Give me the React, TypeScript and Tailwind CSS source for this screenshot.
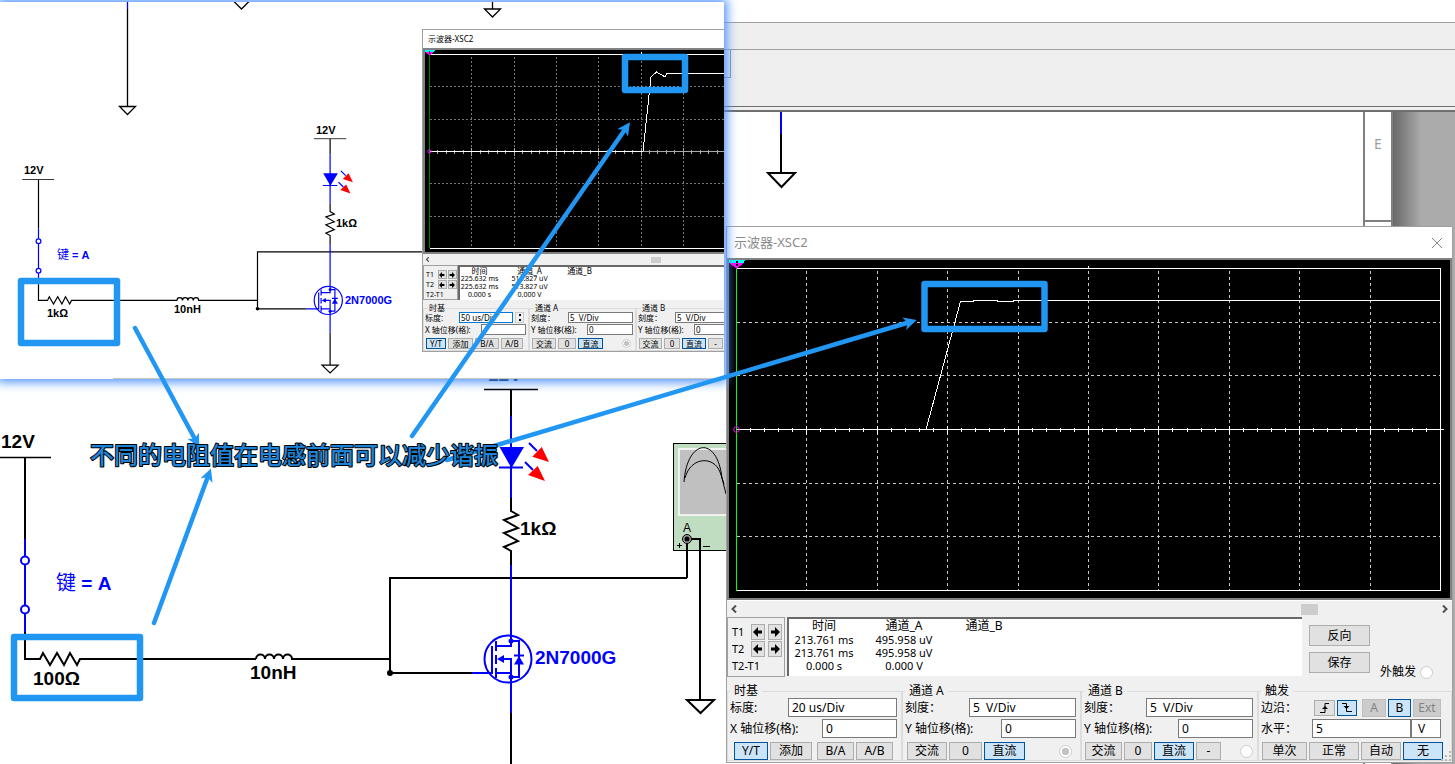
import React from 'react';
import clsx from 'clsx';

const BLUE = '#0000ff';
const MARK = '#2196f3';

const range = (n: number) => Array.from({ length: n }, (_, i) => i);

/* ---------- schematic ---------- */

const Ground = ({ x, y, w = 27, h = 13 }: { x: number; y: number; w?: number; h?: number }) => (
  <path d={`M${x - w / 2} ${y}h${w}L${x} ${y + h}z`} fill="#fff" stroke="#000" />
);

const Circuit = () => (
  <g fill="none" stroke="#000" strokeWidth="2">
    {/* supply and switch */}
    <path d="M-2 457.5H51" strokeWidth="1.3" />
    <path d="M25 458V539M25 632V659H40l3-6 7 12 7-12 7 12 6-12 7 12 3-6H256" />
    <path d="M25 539V556M25 565V605M25 614V632" stroke={BLUE} />
    <circle cx="25" cy="560.5" r="4" stroke={BLUE} />
    <circle cx="25" cy="609.5" r="4" stroke={BLUE} />

    {/* inductor */}
    <path d="M256 659c0-6 9-6 9 0c0-6 9-6 9 0c0-6 9-6 9 0c0-6 9-6 9 0H390" />
    <path d="M687 578H390V673H472" />
    <circle cx="390" cy="673" r="3" fill="#000" stroke="none" />

    {/* led branch */}
    <path d="M484 389.5H538" strokeWidth="1.3" />
    <path d="M511 390V416M511 498V511l7 4-14 5 14 8-14 5 14 8-14 6 7 4V565M511 713V767" />
    <path d="M511 416V498M511 565V646H496M499 467.5H523" stroke={BLUE} />
    <path d="M499.5 447H524L511.5 468z" fill={BLUE} stroke="none" />
    <path d="M529 443l8 8M525 462l8 8" stroke={BLUE} />
    <path d="M541.7 447L532.3 456.7L549 462zM537.7 466L528 475L545 481z" fill="#f00" stroke="none" />

    {/* mosfet */}
    <g stroke={BLUE}>
      <circle cx="508" cy="659" r="23.5" />
      <path d="M472 673H492V646M496 641V651M496 655V664M496 668V678M496 673H511M503 659H511V713" />
      <path d="M511 641H519V677H511M514 655.5H524" />
      <path d="M497 659l7-4v8zM519 656l5 8.5h-10z" fill={BLUE} stroke="none" />
      <circle cx="511" cy="641" r="2.5" fill={BLUE} stroke="none" />
      <circle cx="511" cy="677" r="2.5" fill={BLUE} stroke="none" />
    </g>
    <Ground x={511} y={767} />
  </g>
);

const MainSchematic = () => (
  <svg className="absolute left-0 top-0 h-[764px] w-[1360px]" viewBox="0 0 1360 764">
    <Circuit />
    <g fill="none" stroke="#000" strokeWidth="2">
      <path d="M781 112V134" stroke={BLUE} />
      <path d="M781 134V172" />
      <Ground x={781.5} y={173} h={14} />
      <rect x="673.5" y="443.5" width="70" height="107" fill="#c1ddc1" strokeWidth="1" />
      <rect x="679" y="449" width="60" height="66" fill="#c0c0c0" stroke="#fff" strokeWidth="1.5" />
      <path d="M684 482C687 439 717 435 722 478l4 16M685 478C691 456 714 456 720 472l4 12" strokeWidth="1" />
      <path d="M677 545.5h5M679.5 543v5M703 546.5h7" strokeWidth="1" />
      <path d="M687 539V578M687 539H700V700" />
      <circle cx="687" cy="539" r="4.5" fill="#999" strokeWidth="1" />
      <circle cx="687" cy="539" r="2.5" fill="#000" stroke="none" />
      <Ground x={700.5} y={700} />
    </g>
    <text x="683" y="532" fontSize="12">A</text>
    <g fontSize="19" fontWeight="700">
      <text x="1" y="448">12V</text>
      <text x="488" y="381">12V</text>
      <text x="33" y="685">100Ω</text>
      <text x="250" y="679">10nH</text>
      <text x="520" y="535">1kΩ</text>
      <g fill={BLUE}>
        <text x="535" y="664">2N7000G</text>
        <text x="56" y="590"><tspan fontWeight="400" fontSize="20">键</tspan> = A</text>
      </g>
    </g>
  </svg>
);

const InsetSchematic = () => (
  <svg className="absolute left-0 top-0 h-[377px] w-[724px]" viewBox="0 2 724 377">
    <g transform="translate(23.5 -95) scale(0.6)">
      <Circuit />
    </g>
    <g fill="none" stroke="#000" strokeWidth="1.3">
      <path d="M127.5 9V106M492.5 2V9" />
      <path d="M127.5 2V9" stroke={BLUE} />
      <Ground x={127.5} y={106.5} w={16} h={8} />
      <Ground x={241.5} y={1} w={16} h={8} />
      <Ground x={492.5} y={9} w={16} h={8} />
    </g>
    <g fontSize="11" fontWeight="700">
      <text x="24" y="174">12V</text>
      <text x="316" y="134">12V</text>
      <text x="47" y="317">1kΩ</text>
      <text x="174" y="313">10nH</text>
      <text x="336" y="227">1kΩ</text>
      <g fill={BLUE}>
        <text x="345" y="304">2N7000G</text>
        <text x="57" y="259"><tspan fontWeight="400" fontSize="12">键</tspan> = A</text>
      </g>
    </g>
  </svg>
);

/* ---------- oscilloscope ---------- */

type PlotProps = {
  className: string;
  width: number;
  height: number;
  left: number;
  top: number;
  stepX: number;
  stepY: number;
  dash: string;
  grid: string;
  axis: string;
  cursor: string;
  knob: number;
  trace: string;
};

const Plot = ({ className, width, height, left, top, stepX, stepY, dash, grid, axis, cursor, knob, trace }: PlotProps) => {
  const right = left + stepX * 10;
  const bottom = top + stepY * 6;
  const mid = top + stepY * 3;
  return (
    <svg className={className} viewBox={`0 0 ${width} ${height}`} shapeRendering="crispEdges">
      <g stroke={grid} strokeDasharray={dash}>
        {range(9).map((i) => (
          <line key={i} x1={left + stepX * (i + 1)} x2={left + stepX * (i + 1)} y1={top + 2} y2={bottom} />
        ))}
        {[1, 2, 4, 5].map((i) => (
          <line key={i} x1={left} x2={right} y1={top + stepY * i} y2={top + stepY * i} />
        ))}
      </g>
      <g stroke={axis}>
        <line x1={left} x2={right + 3} y1={mid} y2={mid} />
        {range(50).map((i) => {
          const major = i % 5 === 0 ? 2 : 0;
          return (
            <line
              key={i}
              x1={left + (stepX * i) / 5}
              x2={left + (stepX * i) / 5}
              y1={mid - 1.5 - major}
              y2={mid + 2.5 + major}
            />
          );
        })}
      </g>
      <path d={`M${left} ${top}H${right}V${bottom}H${left}M${left + stepX * 5} ${top - 3}v3`} fill="none" stroke="#fff" />
      <path d={trace} fill="none" stroke="#fff" />
      <rect x={left - 0.5} y={top} width="1" height={bottom - top} fill={cursor} />
      <g transform={`translate(${left} 0) scale(${knob})`}>
        <path d="M-9 0h18l-2 3h-14z" fill="#00ffff" />
        <path d="M-7 3h14l-7 6z" fill="#ff00ff" />
        <path d="M-1 1h2v2h-2zM-1 4h2v2h-2z" fill="#000" />
      </g>
      <circle cx={left} cy={mid} r={2.8 * knob} fill="none" stroke="#ff00ff" shapeRendering="auto" />
    </svg>
  );
};

type BtnProps = { on?: boolean; off?: boolean; className?: string; children: React.ReactNode; label?: string };

const Btn = ({ on, off, className, children, label }: BtnProps) => (
  <button
    type="button"
    disabled={off}
    aria-label={label}
    className={clsx(
      'flex shrink-0 items-center justify-center border leading-none',
      on && 'border-[#005499] bg-[#cce4f7]',
      off && 'border-[#bfbfbf] bg-[#cccccc] text-[#838383]',
      !on && !off && 'border-[#adadad] bg-[#e1e1e1]',
      className,
    )}
  >
    {children}
  </button>
);

type FieldProps = { id: string; label: string; value: string; row: string; input: string; active?: boolean };

const Field = ({ id, label, value, row, input, active }: FieldProps) => (
  <div className={clsx('flex items-center justify-between', row)}>
    <label htmlFor={id} className="whitespace-nowrap">{label}</label>
    <input
      id={id}
      defaultValue={value}
      className={clsx('h-full shrink-0 border bg-white outline-none', active ? 'border-[#0078d7]' : 'border-[#7a7a7a]', input)}
    />
  </div>
);

const Radio = ({ name, className, picked }: { name: string; className: string; picked?: boolean }) => (
  <input
    type="radio"
    aria-label={name}
    defaultChecked={picked}
    className={clsx(
      'shrink-0 appearance-none rounded-full border border-[#cccccc] bg-white',
      picked && 'bg-[radial-gradient(#c3c3c3_45%,#fff_50%)]',
      className,
    )}
  />
);

const ArrowIcon = ({ flip, className }: { flip?: boolean; className: string }) => (
  <svg viewBox="0 0 10 10" className={className}>
    <path d={flip ? 'M10 5L5 0v3.500H1v3h4V10z' : 'M0 5L5 0v3.500h4v3H5V10z'} fill="#000" />
  </svg>
);

const Chevron = ({ flip, className }: { flip?: boolean; className: string }) => (
  <svg viewBox="0 0 8 8" className={className}>
    <path d={flip ? 'M2 0.500L5.500 4L2 7.500' : 'M6 0.500L2.500 4L6 7.500'} fill="none" stroke="#505050" strokeWidth="2" />
  </svg>
);

const Cursors = ({ className, btn, icon, gap }: { className: string; btn: string; icon: string; gap: string }) => (
  <div className={clsx('flex flex-col border border-[#a0a0a0] bg-[#f0f0f0]', className)}>
    {['T1', 'T2'].map((t) => (
      <div key={t} className={clsx('flex items-center', gap)}>
        <span className="flex-1">{t}</span>
        <Btn className={btn} label={`${t} left`}><ArrowIcon className={icon} /></Btn>
        <Btn className={btn} label={`${t} right`}><ArrowIcon flip className={icon} /></Btn>
      </div>
    ))}
    <span>T2-T1</span>
  </div>
);

type ReadoutProps = { rows: string[][]; className: string; head: string; cell: string; cols: string[] };

const Readout = ({ rows, className, head, cell, cols }: ReadoutProps) => (
  <div className={clsx('border-l-2 border-t-2 border-[#696969] bg-white', className)}>
    <table className="table-fixed text-center">
      <colgroup>
        {cols.map((c, i) => <col key={i} className={c} />)}
      </colgroup>
      <thead>
        <tr>
          {['时间', '通道_A', '通道_B'].map((h) => <th key={h} className={clsx('p-0 font-normal', head)}>{h}</th>)}
        </tr>
      </thead>
      <tbody>
        {rows.map((r, i) => (
          <tr key={i}>
            {r.map((v, j) => <td key={j} className={clsx('whitespace-nowrap p-0', cell)}>{v}</td>)}
            <td className="p-0" />
          </tr>
        ))}
      </tbody>
    </table>
  </div>
);

const Group = ({ title, legend, children }: { title: string; legend: string; children: React.ReactNode }) => (
  <fieldset className="flex min-w-0 flex-col border border-[#dcdcdc]">
    <legend className={legend}>{title}</legend>
    {children}
  </fieldset>
);

const EdgeIcon = ({ falling }: { falling?: boolean }) => (
  <svg viewBox="0 0 12 12" className="size-3" fill="none" stroke="#000" strokeWidth="1">
    <path d={falling ? 'M1 1.500H5.500V9.500H11' : 'M1 10.500H6V1.500H10'} />
    <path d={falling ? 'M2.500 4h6L5.500 7z' : 'M3 7h6L6 4z'} fill="#000" stroke="none" />
  </svg>
);

const LEGEND = 'ml-0.5 px-1 leading-[14px]';
const ROW = 'mb-0.5 h-[19px] pl-0.5 pr-1';
const BTNS = 'mt-0.5 flex h-[18px] items-center gap-0.5';

const ScopeWindow = () => (
  <section className="absolute left-[726px] top-[226px] w-[727px] border border-[#a0a0a0] bg-[#f0f0f0] text-xs text-black">
    <header className="flex h-[31px] items-center justify-between bg-white pl-[7px] pr-[9px] text-[13px] text-[#8a8a8a]">
      <h2>示波器-XSC2</h2>
      <button type="button" aria-label="close">
        <svg viewBox="0 0 12 12" className="size-3" stroke="#8a8a8a" fill="none">
          <path d="M1 1L11 11M11 1L1 11" />
        </svg>
      </button>
    </header>
    <div className="border-2 border-[#828282] bg-black">
      <Plot
        className="block h-[338px] w-full"
        width={721}
        height={338}
        left={7.5}
        top={8.5}
        stepX={70.4}
        stepY={53.67}
        dash="3 3"
        grid="#c8c8c8"
        axis="#fff"
        cursor="#00ff00"
        knob={1}
        trace="M7.500 169.500H197L231.500 41.500H244V40.500H268V41.500H284V40.500H711"
      />
    </div>
    <div className="flex h-[17px] items-center border-t border-white px-[3px]">
      <Chevron className="size-2" />
      <div className="ml-[563px] h-[11px] w-[17px] bg-[#cdcdcd]" />
      <Chevron flip className="ml-auto size-2" />
    </div>
    <div className="flex h-[67px]">
      <Cursors
        className="h-[60px] w-[58px] gap-px pb-px pl-1 pr-0.5 pt-[6px] text-[11px] leading-4"
        btn="h-4 w-[14px]"
        icon="size-[10px]"
        gap="gap-[3px]"
      />
      <Readout
        className="ml-0.5 h-[59px] w-[515px]"
        cols={['w-[70px]', 'w-[90px]', 'w-[70px]']}
        head="leading-[14px]"
        cell="text-[11px] leading-[13px]"
        rows={[
          ['213.761 ms', '495.958 uV'],
          ['213.761 ms', '495.958 uV'],
          ['0.000 s', '0.000 V'],
        ]}
      />
      <div className="ml-[7px] flex flex-col gap-1.5 pt-2">
        <Btn className="h-[21px] w-[61px]">反向</Btn>
        <Btn className="h-[21px] w-[61px]">保存</Btn>
      </div>
      <label className="ml-2.5 flex items-center gap-1 self-end pb-1">
        外触发
        <Radio name="外触发" className="size-[13px]" />
      </label>
    </div>
    <div className="mb-px grid grid-cols-[175px_179px_177px_1fr]">
      <Group title="时基" legend={LEGEND}>
        <Field id="tb" label="标度:" value="20 us/Div" row={ROW} input="w-[109px] px-[3px]" />
        <Field id="tx" label="X 轴位移(格):" value="0" row={ROW} input="w-[75px] px-[3px]" />
        <div className={clsx(BTNS, 'pl-[6px]')}>
          <Btn on className="h-full w-[34px]">Y/T</Btn>
          <Btn className="mr-[3px] h-full w-[42px]">添加</Btn>
          <Btn className="h-full w-[37px]">B/A</Btn>
          <Btn className="h-full w-[37px]">A/B</Btn>
        </div>
      </Group>
      <Group title="通道 A" legend={LEGEND}>
        <Field id="as" label="刻度：" value="5  V/Div" row={ROW} input="w-[107px] px-[3px]" />
        <Field id="ay" label="Y 轴位移(格):" value="0" row={ROW} input="w-[75px] px-[3px]" />
        <div className={clsx(BTNS, 'pl-1')}>
          <Btn className="h-full w-[40px]">交流</Btn>
          <Btn className="h-full w-[33px]">0</Btn>
          <Btn on className="h-full w-[41px]">直流</Btn>
          <Radio name="通道 A" picked className="ml-auto mr-2 size-[13px]" />
        </div>
      </Group>
      <Group title="通道 B" legend={LEGEND}>
        <Field id="bs" label="刻度：" value="5  V/Div" row={ROW} input="w-[107px] px-[3px]" />
        <Field id="by" label="Y 轴位移(格):" value="0" row={ROW} input="w-[75px] px-[3px]" />
        <div className={clsx(BTNS, 'pl-[3px]')}>
          <Btn className="h-full w-[37px]">交流</Btn>
          <Btn className="h-full w-[28px]">0</Btn>
          <Btn on className="h-full w-[40px]">直流</Btn>
          <Btn className="h-full w-[25px]">-</Btn>
          <Radio name="通道 B" className="ml-auto mr-1 size-[13px]" />
        </div>
      </Group>
      <Group title="触发" legend={LEGEND}>
        <div className="mb-0.5 flex h-[19px] items-center gap-0.5 pl-0.5 pr-2.5">
          <span className="flex-1">边沿：</span>
          <Btn className="h-4 w-[21px]" label="rising"><EdgeIcon /></Btn>
          <Btn on className="mr-[3px] h-4 w-[20px]" label="falling"><EdgeIcon falling /></Btn>
          <Btn off className="h-[18px] w-[24px]">A</Btn>
          <Btn on className="h-[18px] w-[23px]">B</Btn>
          <Btn off className="h-[18px] w-[28px]">Ext</Btn>
        </div>
        <div className="mb-0.5 flex h-[19px] items-center pl-0.5 pr-2.5">
          <label htmlFor="lv" className="flex-1">水平：</label>
          <input id="lv" defaultValue="5" className="h-full w-[99px] border border-[#7a7a7a] bg-white px-[3px]" />
          <input aria-label="unit" defaultValue="V" className="h-full w-[30px] border border-[#7a7a7a] bg-white px-[6px]" />
        </div>
        <div className={clsx(BTNS, 'pl-[3px]')}>
          <Btn className="h-full w-[45px]">单次</Btn>
          <Btn className="h-full w-[50px]">正常</Btn>
          <Btn className="h-full w-[40px]">自动</Btn>
          <Btn on className="h-full w-[40px]">无</Btn>
        </div>
      </Group>
    </div>
    {/* resize grip */}
    <svg viewBox="0 0 11 11" className="absolute bottom-0 right-0 size-[11px]" fill="#b8b8b8">
      <path d="M8 0h2v2h-2zM8 4h2v2h-2zM8 8h2v2h-2zM4 4h2v2h-2zM4 8h2v2h-2zM0 8h2v2h-2z" />
    </svg>
  </section>
);

const S_LEGEND = 'ml-1 px-px leading-[8px]';
const S_ROW = 'mb-px h-[11px] pl-px pr-0.5';
const S_BTNS = 'flex h-[11px] items-center gap-0.5 pl-0.5 mt-0.5 mb-px';

const InsetScope = () => (
  <section className="absolute left-[422px] top-[27px] w-[322px] border border-[#a0a0a0] bg-[#f0f0f0] text-[8px] text-black">
    <header className="flex h-[18px] items-center bg-white pl-[5px]">
      <h2>示波器-XSC2</h2>
    </header>
    <div className="border-2 border-[#828282] bg-black">
      <Plot
        className="block h-[202px] w-full"
        width={316}
        height={202}
        left={4.5}
        top={4.5}
        stepX={42.3}
        stepY={32.3}
        dash="2 2"
        grid="#777"
        axis="#aaa"
        cursor="#008000"
        knob={0.6}
        trace="M4.500 101.500H218L226 27L231.500 22L236 24.500L240 27L242 23.500H316"
      />
    </div>
    <div className="flex h-[11px] items-center px-0.5">
      <Chevron className="size-[5px]" />
      <div className="ml-[221px] h-[6px] w-[10px] bg-[#cdcdcd]" />
    </div>
    <div className="flex h-[39px]">
      <Cursors
        className="h-[35px] w-[35px] gap-px pl-0.5 pt-1 text-[7px] leading-[9px]"
        btn="h-[9px] w-[9px]"
        icon="size-[6px]"
        gap="gap-px"
      />
      <Readout
        className="h-[35px] w-[290px]"
        cols={['w-[40px]', 'w-[60px]', 'w-[40px]']}
        head="leading-[8px]"
        cell="text-[7px] leading-[8px]"
        rows={[
          ['225.632 ms', '513.827 uV'],
          ['225.632 ms', '513.827 uV'],
          ['0.000 s', '0.000 V'],
        ]}
      />
    </div>
    <div className="grid grid-cols-[106px_107px_107px]">
      <Group title="时基" legend={S_LEGEND}>
        <div className="flex items-start">
          <div className="flex-1">
            <Field id="stb" label="标度:" value="50 us/Div" row={S_ROW} input="w-[54px] px-px" active />
          </div>
          <div className="mr-1 flex h-[11px] w-[9px] flex-col items-center justify-around border border-[#cccccc] bg-[#f0f0f0]">
            <i className="size-0.5 bg-black" />
            <i className="size-0.5 bg-black" />
          </div>
        </div>
        <Field id="stx" label="X 轴位移(格):" value="" row={S_ROW} input="w-[45px] px-px" />
        <div className={S_BTNS}>
          <Btn on className="h-full w-[20px]">Y/T</Btn>
          <Btn className="h-full w-[25px]">添加</Btn>
          <Btn className="h-full w-[24px]">B/A</Btn>
          <Btn className="h-full w-[22px]">A/B</Btn>
        </div>
      </Group>
      <Group title="通道 A" legend={S_LEGEND}>
        <Field id="sas" label="刻度：" value="5  V/Div" row={S_ROW} input="w-[65px] px-px" />
        <Field id="say" label="Y 轴位移(格):" value="0" row={S_ROW} input="w-[46px] px-px" />
        <div className={S_BTNS}>
          <Btn className="h-full w-[24px]">交流</Btn>
          <Btn className="h-full w-[18px]">0</Btn>
          <Btn on className="h-full w-[25px]">直流</Btn>
          <Radio name="inset A" picked className="ml-auto mr-1 size-[9px]" />
        </div>
      </Group>
      <Group title="通道 B" legend={S_LEGEND}>
        <Field id="sbs" label="刻度：" value="5  V/Div" row={S_ROW} input="w-[65px] px-px" />
        <Field id="sby" label="Y 轴位移(格):" value="0" row={S_ROW} input="w-[46px] px-px" />
        <div className={S_BTNS}>
          <Btn className="h-full w-[23px]">交流</Btn>
          <Btn className="h-full w-[16px]">0</Btn>
          <Btn on className="h-full w-[24px]">直流</Btn>
          <Btn className="h-full w-[15px]">-</Btn>
        </div>
      </Group>
    </div>
  </section>
);

/* ---------- notes drawn over everything ---------- */

const Notes = () => (
  <svg className="pointer-events-none absolute left-0 top-0 h-[764px] w-[1455px]" viewBox="0 0 1455 764">
    <defs>
      <marker id="head" markerUnits="userSpaceOnUse" markerWidth="16" markerHeight="14" refX="6" refY="6.5" orient="auto">
        <path d="M13 6.500L0 0L3.500 6.500L0 13z" fill={MARK} />
      </marker>
    </defs>
    <g fill="none" stroke={MARK} strokeWidth="6.5" strokeLinejoin="round">
      <rect x="21" y="281" width="96" height="62" />
      <rect x="14" y="637" width="126" height="61" />
      <rect x="625" y="57" width="60" height="33" />
      <rect x="924.5" y="284" width="120" height="45" />
    </g>
    <g fill="none" stroke={MARK} strokeWidth="4.5" strokeLinecap="round">
      <path d="M135 328L196 441" markerEnd="url(#head)" />
      <path d="M154 623L208.500 475" markerEnd="url(#head)" />
      <path d="M412 436L626 128" markerEnd="url(#head)" />
      <path d="M447 460L910 322" markerEnd="url(#head)" />
    </g>
    <text
      x="90"
      y="464"
      fontSize="24"
      fontWeight="500"
      fill="#1e83d6"
      stroke="#000"
      strokeWidth="2"
      strokeLinejoin="round"
      paintOrder="stroke"
    >
      不同的电阻值在电感前面可以减少谐振
    </text>
  </svg>
);

const App: React.FC = () => {
  return (
    <main className="relative flex min-h-screen w-full flex-col overflow-hidden bg-white font-['Noto_Sans','Noto_Sans_CJK_SC',sans-serif]">
      {/* editor chrome */}
      <div className="h-[22px] bg-white" />
      <div className="h-[27px] border-t border-[#a0a0a0] bg-[#efefef]" />
      <div className="h-[57px] border-t border-[#a0a0a0] bg-[#efefef]">
        <div className="h-7 w-[731px] border-b border-r border-[#8c96a8] bg-[#e6ecf5]" />
      </div>
      <div className="h-[6px] border-b-2 border-t border-[#6e6e6e] bg-[#efefef]" />

      {/* sheet */}
      <div className="flex flex-1">
        <div className="flex-1 bg-white" />
        <div className="flex w-[30px] flex-col border-x-2 border-[#808080] bg-white text-center text-sm text-[#a0a0a0]">
          <div className="h-[110px] border-b-2 border-[#808080] pt-[22px]">E</div>
        </div>
        <div className="w-7 bg-linear-to-r from-[#696969] to-[#ababab]" />
        <div className="w-[34px] bg-[#ababab]" />
      </div>

      <div className="absolute inset-0 font-['Liberation_Sans','Noto_Sans_CJK_SC',sans-serif]">
        <MainSchematic />
      </div>
      <ScopeWindow />

      <div className="absolute left-0 top-[2px] h-[377px] w-[724px] bg-white shadow-[0_0_10px_3px_#4a92ff]">
        <div className="relative h-full overflow-hidden">
          <div className="font-['Liberation_Sans','Noto_Sans_CJK_SC',sans-serif]">
            <InsetSchematic />
          </div>
          <InsetScope />
          <div className="absolute bottom-0 left-[113px] right-0 h-px bg-[#c6c6c6]" />
        </div>
      </div>

      <Notes />
    </main>
  );
};

export default App;
